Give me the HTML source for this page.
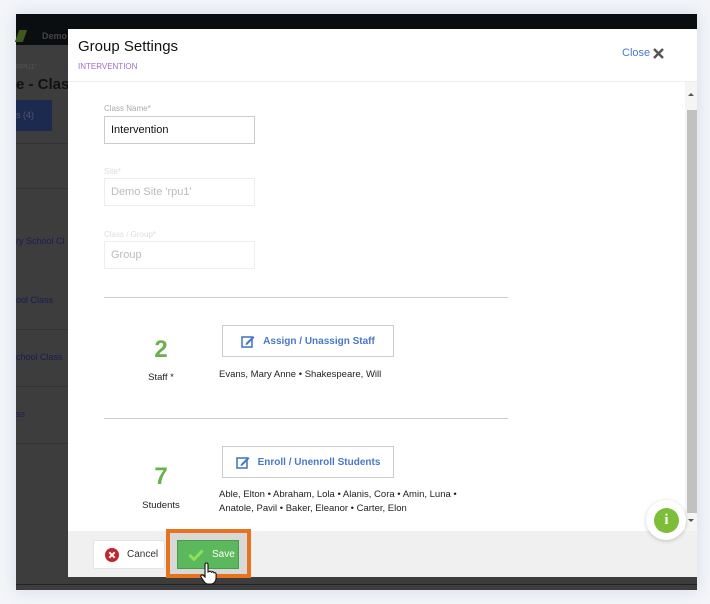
<!DOCTYPE html>
<html><head><meta charset="utf-8"><style>
*{margin:0;padding:0;box-sizing:border-box}
body{width:710px;height:604px;background:#f3f5f9;position:relative;overflow:hidden;font-family:"Liberation Sans",sans-serif}
.a{position:absolute}
.lbl{font-size:8px;color:#aaa}
.inp{border:1px solid #ddd;background:#fff;font-size:11px;padding-left:6px;line-height:26px}
.btn{border:1px solid #ccc;background:#fff;color:#4a78c8;font-weight:bold;font-size:10px;display:flex;align-items:center;justify-content:center;gap:8px}
.t{font-size:9.5px;color:#222}
</style></head><body>
<div class="a" style="left:16px;top:14px;width:681px;height:576px;background:#3d3d3d;box-shadow:0 0 14px rgba(120,140,180,.25)"></div>
<div class="a" style="left:16px;top:14px;width:681px;height:15px;background:#0b0e11"></div>
<div class="a" style="left:16px;top:14px;width:52px;height:31px;background:#0b0e11"></div>
<div class="a" style="left:17px;top:30px;width:8px;height:12px;background:#3d5a1c;transform:skew(-20deg)"></div>
<div class="a" style="left:42px;top:31px;font-size:9px;color:#444;font-weight:bold">Demo</div>
<div class="a" style="left:16px;top:64px;font-size:7px;color:#555">RPU1'</div>
<div class="a" style="left:16px;top:76px;font-size:15px;color:#111;font-weight:bold">e - Class</div>
<div class="a" style="left:16px;top:100px;width:36px;height:31px;background:#1b2a4e;color:#556;font-size:9px;line-height:31px">s (4)</div>
<div class="a" style="left:16px;top:143px;width:52px;height:1px;background:#333"></div>
<div class="a" style="left:16px;top:188px;width:52px;height:1px;background:#333"></div>
<div class="a" style="left:16px;top:236px;font-size:9px;color:#1b1b55">ry School Cl</div>
<div class="a" style="left:16px;top:295px;font-size:9px;color:#1b1b55">ool Class</div>
<div class="a" style="left:16px;top:329px;width:52px;height:1px;background:#333"></div>
<div class="a" style="left:16px;top:352px;font-size:9px;color:#1b1b55">chool Class</div>
<div class="a" style="left:16px;top:386px;width:52px;height:1px;background:#333"></div>
<div class="a" style="left:16px;top:409px;font-size:9px;color:#1b1b55">ss</div>
<div class="a" style="left:16px;top:443px;width:52px;height:1px;background:#333"></div>
<div class="a" style="left:16px;top:584px;width:681px;height:1px;background:#222"></div>

<div class="a" style="left:68px;top:29px;width:629px;height:548px;background:#fff"></div>
<div class="a" style="left:78px;top:38px;font-size:15px;color:#111">Group Settings</div>
<div class="a" style="left:78px;top:62px;font-size:8px;color:#9b6fc6">INTERVENTION</div>
<div class="a" style="left:622px;top:47px;font-size:11px;color:#4a78c8">Close</div>
<svg class="a" style="left:653px;top:48px" width="11" height="11" viewBox="0 0 11 11"><path d="M1 1L10 10M10 1L1 10" stroke="#555" stroke-width="2.4"/></svg>
<div class="a" style="left:68px;top:81px;width:629px;height:1px;background:#eee"></div>
<div class="a" style="left:685px;top:82px;width:12px;height:449px;background:#f5f5f5"></div>
<div class="a" style="left:687px;top:110px;width:10px;height:403px;background:#c1c1c1"></div>
<div class="a" style="left:688px;top:90px;width:0;height:0;border:3px solid transparent;border-bottom:3px solid #555"></div>
<div class="a" style="left:688px;top:519px;width:0;height:0;border:3px solid transparent;border-top:3px solid #555"></div>

<div class="a lbl" style="left:104px;top:104px">Class Name*</div>
<div class="a inp" style="left:104px;top:116px;width:151px;height:28px;color:#111;border-color:#ccc">Intervention</div>
<div class="a lbl" style="left:104px;top:167px;color:#ddd">Site*</div>
<div class="a inp" style="left:104px;top:178px;width:151px;height:28px;color:#bbb;border-color:#eee">Demo Site 'rpu1'</div>
<div class="a lbl" style="left:104px;top:230px;color:#ddd">Class / Group*</div>
<div class="a inp" style="left:104px;top:241px;width:151px;height:28px;color:#bbb;border-color:#eee">Group</div>
<div class="a" style="left:104px;top:297px;width:404px;height:1px;background:#ccc"></div>
<div class="a" style="left:104px;top:418px;width:404px;height:1px;background:#ccc"></div>

<div class="a" style="left:131px;top:336px;width:60px;text-align:center;font-size:24px;font-weight:bold;color:#6ab04c">2</div>
<div class="a t" style="left:131px;top:372px;width:60px;text-align:center">Staff *</div>
<div class="a btn" style="left:222px;top:325px;width:172px;height:32px"><svg width="14" height="14" viewBox="0 0 14 14"><rect x="1" y="3" width="10" height="10" fill="none" stroke="#4a78c8" stroke-width="1.6"/><path d="M5 9L12 2L13.5 3.5L6.5 10.5L4.5 11Z" fill="#4a78c8"/></svg>Assign / Unassign Staff</div>
<div class="a t" style="left:219px;top:369px">Evans, Mary Anne • Shakespeare, Will</div>

<div class="a" style="left:131px;top:463px;width:60px;text-align:center;font-size:24px;font-weight:bold;color:#6ab04c">7</div>
<div class="a t" style="left:131px;top:500px;width:60px;text-align:center">Students</div>
<div class="a btn" style="left:222px;top:446px;width:172px;height:32px"><svg width="14" height="14" viewBox="0 0 14 14"><rect x="1" y="3" width="10" height="10" fill="none" stroke="#4a78c8" stroke-width="1.6"/><path d="M5 9L12 2L13.5 3.5L6.5 10.5L4.5 11Z" fill="#4a78c8"/></svg>Enroll / Unenroll Students</div>
<div class="a t" style="left:219px;top:489px">Able, Elton • Abraham, Lola • Alanis, Cora • Amin, Luna •</div>
<div class="a t" style="left:219px;top:503px">Anatole, Pavil • Baker, Eleanor • Carter, Elon</div>

<div class="a" style="left:68px;top:531px;width:629px;height:46px;background:#f0f0f0"></div>
<div class="a" style="left:93px;top:540px;width:72px;height:29px;background:#fff;border:1px solid #e4e4e4;border-radius:2px;font-size:10px;color:#333;display:flex;align-items:center;padding-left:11px;gap:8px"><svg width="14" height="14" viewBox="0 0 14 14"><circle cx="7" cy="7" r="7" fill="#c0262c"/><path d="M4.3 4.3L9.7 9.7M9.7 4.3L4.3 9.7" stroke="#fff" stroke-width="2"/></svg>Cancel</div>
<div class="a" style="left:166px;top:529px;width:85px;height:49px;border:4px solid #e8731e;background:#d8d8d8"></div>
<div class="a" style="left:177px;top:540px;width:62px;height:29px;background:#5cb85c;border:1px solid #4a9a4a;font-size:10px;color:#fff;display:flex;align-items:center;padding-left:10px;gap:8px"><svg width="16" height="12" viewBox="0 0 16 12"><path d="M1.5 6L6 10.5L14.5 1.5" stroke="#8ee05a" stroke-width="3" fill="none"/></svg>Save</div>
<svg class="a" style="left:199px;top:562px" width="18" height="24" viewBox="0 0 18 24"><path d="M6 2.5a1.5 1.5 0 013 0V10l1-.3a1.4 1.4 0 012.4.5l.4-.1a1.4 1.4 0 012.3.7a1.4 1.4 0 012 1.2V16c0 3-2 6-5 6H9c-2 0-3-1-4-2.5L2 15a1.4 1.4 0 012.2-1.7L6 15Z" fill="#fff" stroke="#111" stroke-width="1.1"/></svg>

<div class="a" style="left:646px;top:500px;width:40px;height:40px;border-radius:50%;background:#fff;box-shadow:0 1px 4px rgba(0,0,0,.2)"></div>
<div class="a" style="left:654px;top:508px;width:25px;height:25px;border-radius:50%;background:#7cbd3a;color:#fff;font-weight:bold;font-family:'Liberation Serif',serif;font-size:15px;text-align:center;line-height:25px">i</div>
</body></html>
